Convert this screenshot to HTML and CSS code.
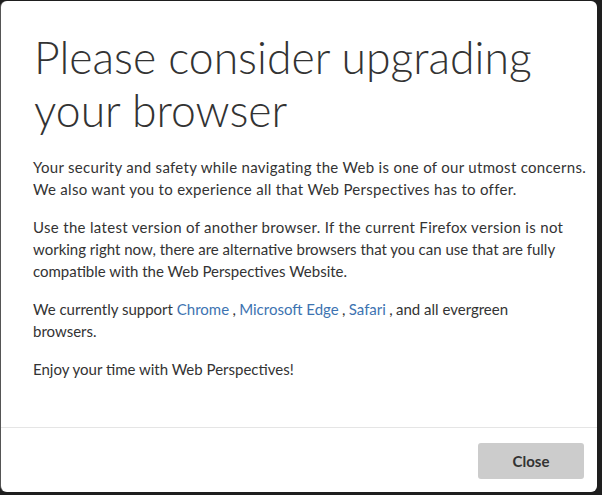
FILE: index.html
```html
<!DOCTYPE html>
<html lang="en">
<head>
<meta charset="utf-8">
<title>Upgrade your browser</title>
<link rel="stylesheet" href="styles.css">
</head>
<body>
<div class="modal">
  <div class="modal-body">
    <h1 class="title">Please consider upgrading your browser</h1>
    <p class="lead">Your security and safety while navigating the Web is one of our utmost concerns. We also want you to experience all that Web Perspectives has to offer.</p>
    <p><span class="wide">Use the latest version of another browser. If the current Firefox version is not</span> working right now, there are alternative browsers that you can use that are fully compatible with the Web Perspectives Website.</p>
    <p class="note">We currently support <a href="#">Chrome</a><span class="sep"> , </span><a href="#">Microsoft Edge</a><span class="sep"> , </span><a href="#">Safari</a><span class="sep"> , </span>and all evergreen browsers.</p>
    <p class="note">Enjoy your time with Web Perspectives!</p>
  </div>
  <div class="modal-footer">
    <button class="btn-close" type="button">Close</button>
  </div>
</div>
</body>
</html>
```
FILE: styles.css
```css
html, body {
  margin: 0;
  padding: 0;
  height: 100%;
}
body {
  background: #1e1e1e;
  font-family: Lato, "Open Sans", sans-serif;
  color: #333;
  overflow: hidden;
}
.modal {
  margin: 1px 0 0 1px;
  width: 596px;
  height: 491px;
  background: #fff;
  border-radius: 6px;
  box-shadow: -1px 0 0 #555;
  display: flex;
  flex-direction: column;
}
.modal-body {
  flex: 1;
  padding: 29px 8px 0 32px;
}
.title {
  margin: 0 0 20px 1px;
  font-weight: 300;
  font-size: 44.5px;
  line-height: 53px;
  color: #333;
}
.modal-body p {
  margin: 0 0 16px;
  font-size: 15px;
  line-height: 22px;
}
.lead {
  letter-spacing: 0.3px;
}
.wide {
  letter-spacing: 0.32px;
}
.note {
  max-width: 527px;
}
.sep {
  word-spacing: -0.5px;
}
.modal-body a {
  color: #3d73b1;
  text-decoration: none;
}
.modal-footer {
  border-top: 1px solid #e5e5e5;
  height: 65px;
  display: flex;
  justify-content: flex-end;
  align-items: flex-start;
  padding: 15px 13px 0 0;
  box-sizing: border-box;
}
.btn-close {
  width: 106px;
  height: 36px;
  border: none;
  border-radius: 3px;
  background: #cccccc;
  color: #333;
  font-family: Lato, sans-serif;
  font-weight: 700;
  font-size: 15px;
  padding: 0;
}
```
